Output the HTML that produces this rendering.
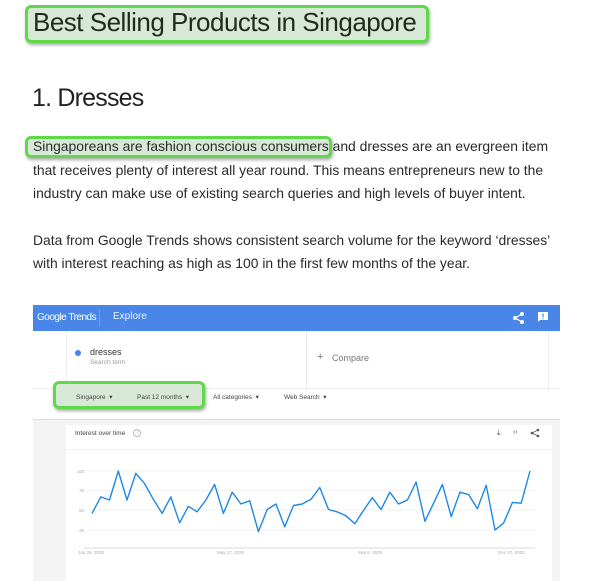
<!DOCTYPE html>
<html><head><meta charset="utf-8"><style>
*{margin:0;padding:0;box-sizing:border-box}
body{width:600px;height:581px;background:#fff;font-family:"Liberation Sans",sans-serif;color:#212121;position:relative;overflow:hidden}
.abs{position:absolute;white-space:nowrap}
.h1box{left:25px;top:5px;width:404px;height:38px;background:#d8e8d6;border:3px solid #5fd94a;border-radius:6px;box-shadow:1px 2px 3px rgba(0,0,0,.35)}
.h1{left:33px;top:7px;font-size:26px;letter-spacing:-0.5px;color:#1f2a1f}
.h2{left:32px;top:84px;font-size:25px;letter-spacing:-0.8px;color:#222}
.p{left:33px;font-size:13.9px;color:#2a2a2a}
.hl{left:25px;top:136px;width:307px;height:22px;background:#d8e8d6;border:3px solid #5fd94a;border-radius:6px;box-shadow:1px 2px 3px rgba(0,0,0,.35)}
.bar{left:33px;top:305px;width:527px;height:26px;background:#4a86e8}
.s{font-size:8px;color:#444}
</style></head><body>
<div class="abs h1box"></div>
<div class="abs h1">Best Selling Products in Singapore</div>
<div class="abs h2">1. Dresses</div>
<div class="abs hl"></div>
<div class="abs p" style="top:138px">Singaporeans are fashion conscious consumers and dresses are an evergreen item</div>
<div class="abs p" style="top:162px">that receives plenty of interest all year round. This means entrepreneurs new to the</div>
<div class="abs p" style="top:185px">industry can make use of existing search queries and high levels of buyer intent.</div>
<div class="abs p" style="top:232px">Data from Google Trends shows consistent search volume for the keyword ‘dresses’</div>
<div class="abs p" style="top:255px">with interest reaching as high as 100 in the first few months of the year.</div>

<div class="abs bar"></div>
<div class="abs" style="left:37px;top:312px;font-size:10px;color:#fff;letter-spacing:-.5px">Google Trends</div>
<div class="abs" style="left:99px;top:309px;width:1px;height:18px;background:#6d9eee"></div>
<div class="abs" style="left:113px;top:311px;font-size:10px;color:#e8f0fe">Explore</div>
<svg class="abs" style="left:512px;top:311px" width="14" height="14" viewBox="0 0 14 14"><circle cx="10" cy="3" r="2" fill="#fff"/><circle cx="3" cy="7" r="2" fill="#fff"/><circle cx="10" cy="11" r="2" fill="#fff"/><path d="M10 3L3 7L10 11" stroke="#fff" stroke-width="1.2" fill="none"/></svg>
<svg class="abs" style="left:537px;top:311px" width="12" height="12" viewBox="0 0 12 12"><path d="M1 1h10v8H3l-2 2z" fill="#fff"/><rect x="5.4" y="2.5" width="1.2" height="3.5" fill="#4a86e8"/><rect x="5.4" y="7" width="1.2" height="1.2" fill="#4a86e8"/></svg>

<div class="abs" style="left:66px;top:331px;width:483px;height:59px;border-left:1px solid #eee;border-right:1px solid #eee"></div>
<div class="abs" style="left:306px;top:331px;width:1px;height:59px;background:#e6e6e6"></div>
<div class="abs" style="left:33px;top:388px;width:527px;height:1px;background:#eee"></div>
<div class="abs" style="left:75px;top:350px;width:6px;height:6px;border-radius:50%;background:#4285f4"></div>
<div class="abs" style="left:90px;top:347px;font-size:9px;color:#333">dresses</div>
<div class="abs" style="left:90px;top:359px;font-size:6.5px;color:#999">Search term</div>
<div class="abs" style="left:317px;top:351px;font-size:11px;color:#777">+</div>
<div class="abs" style="left:332px;top:353px;font-size:9px;color:#777">Compare</div>

<div class="abs" style="left:33px;top:419px;width:527px;height:162px;background:#f4f4f4;border-top:1px solid #ddd"></div>
<div class="abs" style="left:53px;top:381px;width:152px;height:28px;background:#d8e8d6;border:3px solid #5fd94a;border-radius:6px;box-shadow:1px 2px 3px rgba(0,0,0,.35)"></div>
<div class="abs s" style="left:76px;top:393px;font-size:6.5px">Singapore &nbsp;▾</div>
<div class="abs s" style="left:137px;top:393px;font-size:6.5px">Past 12 months &nbsp;▾</div>
<div class="abs s" style="left:213px;top:393px;font-size:6.5px">All categories &nbsp;▾</div>
<div class="abs s" style="left:284px;top:393px;font-size:6.5px">Web Search &nbsp;▾</div>
<div class="abs" style="left:66px;top:425px;width:486px;height:156px;background:#fff"></div>
<div class="abs" style="left:66px;top:449px;width:486px;height:1px;background:#f0f0f0"></div>
<div class="abs" style="left:75px;top:430px;font-size:6.5px;color:#444">Interest over time</div>
<div class="abs" style="left:133px;top:429px;width:8px;height:8px;border:1px solid #bbb;border-radius:50%;font-size:6px;color:#bbb;text-align:center;line-height:7px">?</div>
<div class="abs" style="left:497px;top:428px;font-size:8px;color:#555">⤓</div>
<div class="abs" style="left:513px;top:429px;font-size:7px;color:#555">‹›</div>
<svg class="abs" style="left:530px;top:428px" width="10" height="10" viewBox="0 0 10 10"><circle cx="8" cy="2" r="1.3" fill="#555"/><circle cx="2" cy="5" r="1.3" fill="#555"/><circle cx="8" cy="8" r="1.3" fill="#555"/><path d="M8 2L2 5L8 8" stroke="#555" stroke-width=".8" fill="none"/></svg>

<svg class="abs" style="left:0;top:0" width="600" height="581">
<g stroke="#eee" stroke-width="0.8"><line x1="88" y1="471" x2="535" y2="471"/><line x1="88" y1="490.5" x2="535" y2="490.5"/><line x1="88" y1="510" x2="535" y2="510"/><line x1="88" y1="530" x2="535" y2="530"/></g>
<line x1="84" y1="548" x2="535" y2="548" stroke="#ccc" stroke-width="0.8"/>
<g font-size="4.5" fill="#aaa" font-family="Liberation Sans"><text x="77" y="473">100</text><text x="79" y="492">75</text><text x="79" y="512">50</text><text x="79" y="532">25</text>
<text x="78" y="554">Jan 26, 2020</text><text x="217" y="554">May 17, 2020</text><text x="358" y="554">Sep 6, 2020</text><text x="498" y="554">Dec 27, 2020</text></g>
<polyline fill="none" stroke="#1e88e5" stroke-width="1.4" stroke-linejoin="round" points="92.0,513.4 100.8,496.9 109.5,500.0 118.3,471.0 127.0,500.0 135.8,473.4 144.6,483.6 153.3,499.3 162.1,513.4 170.8,496.9 179.6,522.8 188.4,506.3 197.1,511.8 205.9,500.0 214.6,484.4 223.4,513.4 232.2,492.2 240.9,504.0 249.7,500.8 258.4,531.6 267.2,509.5 276.0,504.0 284.7,526.8 293.5,505.5 302.2,504.0 311.0,499.3 319.8,487.5 328.5,509.5 337.3,511.9 346.0,515.8 354.8,523.7 363.6,510.3 372.3,497.7 381.1,509.5 389.8,492.2 398.6,504.0 407.4,500.0 416.1,482.0 424.9,521.3 433.6,503.2 442.4,484.4 451.2,516.6 459.9,492.2 468.7,494.6 477.4,508.7 486.2,485.2 495.0,530.0 503.7,522.9 512.5,502.4 521.2,503.2 530.0,471.0"/>
</svg>
</body></html>
